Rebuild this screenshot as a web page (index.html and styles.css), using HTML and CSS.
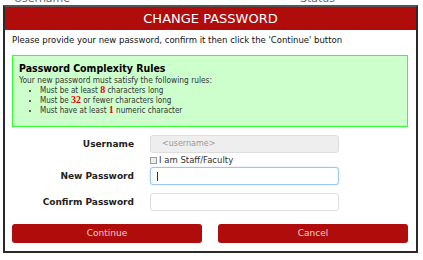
FILE: index.html
```html
<!DOCTYPE html>
<html>
<head>
<meta charset="utf-8">
<link rel="stylesheet" href="styles.css">
</head>
<body>
<div class="behind">
  <span class="behind-a">Username</span>
  <span class="behind-b">Status</span>
</div>
<div class="modal">
  <div class="modal-header">CHANGE PASSWORD</div>
  <p class="intro">Please provide your new password, confirm it then click the 'Continue' button</p>
  <div class="rules">
    <div class="rules-title">Password Complexity Rules</div>
    <div class="rules-sub">Your new password must satisfy the following rules:</div>
    <ul class="rules-list">
      <li>Must be at least <b class="num">8</b> characters long</li>
      <li>Must be <b class="num">32</b> or fewer characters long</li>
      <li>Must have at least <b class="num">1</b> numeric character</li>
    </ul>
  </div>
  <div class="form">
    <div class="row first">
      <label class="lbl">Username</label>
      <div class="field">
        <div class="input disabled">&lt;username&gt;</div>
        <label class="check"><span class="box"></span>I am Staff/Faculty</label>
      </div>
    </div>
    <div class="row">
      <label class="lbl">New Password</label>
      <div class="field"><div class="input focus"><span class="caret"></span></div></div>
    </div>
    <div class="row">
      <label class="lbl">Confirm Password</label>
      <div class="field"><div class="input"></div></div>
    </div>
  </div>
  <div class="buttons">
    <div class="btn">Continue</div>
    <div class="btn">Cancel</div>
  </div>
</div>
</body>
</html>
```
FILE: styles.css
```css
html, body { margin: 0; padding: 0; background: #fff; }
body { font-family: "DejaVu Sans", Verdana, sans-serif; width: 423px; height: 260px; overflow: hidden; }
.behind { height: 5px; overflow: hidden; position: relative; color: #666; font-size: 11px; }
.behind-a { position: absolute; left: 14px; top: -8px; }
.behind-b { position: absolute; left: 300px; top: -8px; }
.modal {
  margin-left: 3px; width: 411px;
  border: 2px solid #2a2a2a; border-top: 2px solid #555;
  background: #fff;
  padding-bottom: 8px;
}
.modal-header {
  background: #b10c0c; color: #fff; height: 23px; line-height: 24px;
  text-align: center; font-size: 13px;
}
.intro { margin: 3px 0 0 7px; font-size: 8.5px; color: #111; line-height: 14px; }
.rules {
  margin: 8px 8px 0 7px; border: 1px solid #33ff33; background: #ccffcc;
  padding: 6px 6px 8px 6px; height: 56px;
}
.rules-title { font-family: "DejaVu Sans Condensed", "DejaVu Sans", sans-serif; font-weight: bold; font-size: 10.5px; color: #000; line-height: 13px; }
.rules-sub { font-family: "DejaVu Sans Condensed", "DejaVu Sans", sans-serif; font-size: 8.3px; color: #333; line-height: 11px; }
.rules-list { margin: 0; padding: 0 0 0 21px; font-family: "DejaVu Sans Condensed", "DejaVu Sans", sans-serif; font-size: 8px; color: #333; line-height: 10px; }
.num { color: #e00; font-family: "Liberation Serif", serif; font-size: 10px; line-height: 0; }
.form { margin-top: 8px; padding-bottom: 1px; }
.row { display: flex; align-items: flex-start; margin-bottom: 8px; }
.row.first { margin-bottom: 0; }
.lbl { width: 129px; text-align: right; font-weight: bold; font-size: 9px; color: #222; line-height: 18px; }
.field { margin-left: 16px; }
.input { width: 187px; height: 16px; border: 1px solid #ddd; border-radius: 3px; background: #fff; font-size: 8px; color: #999; line-height: 16px; position: relative; }
.input.disabled { background: #eee; text-indent: 11px; }
.input.focus { border-color: #9cc8f0; box-shadow: 0 0 2px #bfdcf7; }
.caret { position: absolute; left: 6px; top: 4px; width: 1px; height: 9px; background: #333; }
.check { display: flex; align-items: center; font-size: 8.5px; color: #333; height: 8px; margin-top: 3px; margin-bottom: 3px; }
.box { width: 5px; height: 5px; border: 1px solid #999; background: #eee; margin-right: 2px; }
.buttons { display: flex; gap: 16px; margin: 4px 8px 0 7px; }
.btn { flex: 1; height: 19px; background: #b10c0c; border-radius: 3px; color: #f3d0d0; font-size: 9px; line-height: 19px; text-align: center; }
```
